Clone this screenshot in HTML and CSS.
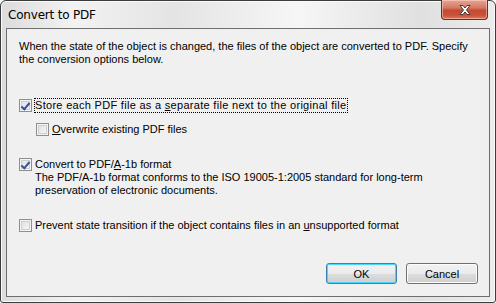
FILE: index.html
```html
<!DOCTYPE html>
<html>
<head>
<meta charset="utf-8">
<link rel="stylesheet" href="styles.css">
</head>
<body>
<div class="window">
  <div class="titlebar">
    <span class="title">Convert to PDF</span>
    <div class="close">
      <svg width="18" height="12" viewBox="0 0 18 12">
        <path d="M4 1.5h3l2 2.5 2-2.5h3l-3.5 4.5 3.5 4.5h-3l-2-2.5-2 2.5h-3l3.5-4.5z" fill="#fff" stroke="#4a3a3a" stroke-width="1" stroke-linejoin="round"/>
      </svg>
    </div>
  </div>
  <div class="client">
    <p class="intro">When the state of the object is changed, the files of the object are converted to PDF. Specify<br>the conversion options below.</p>
    <div class="opt opt1">
      <span class="cb checked"></span>
      <span class="label focus">Store each PDF file as a <u>s</u>eparate file next to the original file</span>
    </div>
    <div class="opt opt2">
      <span class="cb"></span>
      <span class="label"><u>O</u>verwrite existing PDF files</span>
    </div>
    <div class="opt opt3">
      <span class="cb checked"></span>
      <span class="label">Convert to PDF/<u>A</u>-1b format<br>The PDF/A-1b format conforms to the ISO 19005-1:2005 standard for long-term<br>preservation of electronic documents.</span>
    </div>
    <div class="opt opt4">
      <span class="cb"></span>
      <span class="label">Prevent state transition if the object contains files in an <u>u</u>nsupported format</span>
    </div>
    <div class="buttons">
      <button class="btn default">OK</button>
      <button class="btn">Cancel</button>
    </div>
  </div>
</div>
</body>
</html>
```
FILE: styles.css
```css
* { box-sizing: border-box; }
html, body { margin: 0; padding: 0; }
body { width: 496px; height: 303px; overflow: hidden; background: #ffffff; font-family: "Liberation Sans", Arial, sans-serif; font-size: 11px; color: #000; }
.window {
  width: 496px; height: 303px;
  display: flex; flex-direction: column;
  border: 1px solid #3c3c3c;
  border-radius: 6px 6px 3px 3px;
  background: linear-gradient(90deg, #dcdcdc 0%, #f2f2f2 15%, #e4e4e4 35%, #f6f6f6 60%, #e0e0e0 85%, #ececec 100%);
  box-shadow: inset 0 0 0 1px #fafafa;
}
.titlebar {
  height: 27px; display: flex; align-items: flex-start; justify-content: space-between;
  padding-left: 7px;
}
.title { font-family: "DejaVu Sans", sans-serif; font-size: 12px; margin-top: 7px; color: #000; letter-spacing: -0.2px; }
.close {
  width: 47px; height: 20px; margin-right: 7px; margin-top: -1px;
  border: 1px solid #6b2a22; border-top: none;
  border-radius: 0 0 4px 4px;
  background: linear-gradient(#e8a593 0%, #d47a66 40%, #c34a31 55%, #c8523a 80%, #dc7a5c 100%);
  display: flex; align-items: center; justify-content: center;
  box-shadow: inset 0 0 0 1px rgba(255,220,210,0.5);
}
.close svg { display: block; }
.client {
  flex: 1; margin: 0 5px 5px 5px;
  border: 1px solid #6e6e6e;
  background: #f0f0f0;
  padding: 0 12px;
  display: flex; flex-direction: column;
  white-space: nowrap;
}
.intro { margin: 11px 0 0 0; line-height: 13px; }
.opt { display: flex; align-items: flex-start; line-height: 13px; }
.opt1 { margin-top: 33px; }
.opt2 { margin-top: 10px; padding-left: 17px; }
.opt3 { margin-top: 21px; }
.opt4 { margin-top: 21px; }
.cb {
  width: 13px; height: 13px; flex: none;
  border: 1px solid #8e8f8f;
  background: linear-gradient(135deg, #dcdcdc, #fbfbfb);
  box-shadow: inset 0 0 0 1px #f4f4f4, inset 0 0 0 2px #cfcfcf;
  margin-right: 2px;
  position: relative;
}
.cb.checked::after {
  content: ""; position: absolute; left: 3px; top: 1px;
  width: 3px; height: 7px;
  border-right: 2px solid #3a4f99; border-bottom: 2px solid #3a4f99;
  transform: rotate(40deg);
}
.label { padding: 0; border: 1px dotted transparent; margin-top: -1px; }
.label.focus { border-color: #000; padding-right: 1px; letter-spacing: 0.3px; }
u { text-decoration: underline; text-underline-offset: 1px; }
.buttons { margin-top: auto; margin-bottom: 12px; display: flex; justify-content: flex-end; gap: 9px; margin-right: -1px; }
.btn {
  width: 72px; height: 21px; font-family: inherit; font-size: 11px;
  border: 1px solid #707070; border-radius: 3px;
  background: linear-gradient(#f2f2f2 0%, #ebebeb 50%, #dddddd 51%, #cfcfcf 100%);
  box-shadow: inset 0 0 0 1px #fcfcfc;
  color: #000; padding: 0;
}
.btn.default { border-color: #3c7fb1; box-shadow: inset 0 0 0 1px #48d7fb; width: 71px; }
```
